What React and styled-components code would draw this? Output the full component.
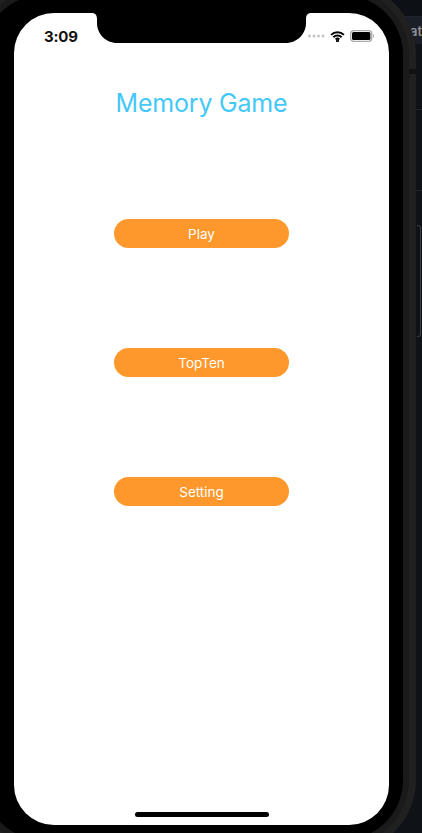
import React from "react";
import styled, { createGlobalStyle } from "styled-components";

const GlobalStyle = createGlobalStyle`
  html, body {
    margin: 0;
    padding: 0;
    height: 100%;
    background: #0f1318;
  }
`;

const Desk = styled.div`
  position: relative;
  width: 422px;
  height: 833px;
  overflow: hidden;
  background: #0f1318;
  font-family: Inter, "Liberation Sans", sans-serif;
`;

const TopStrip = styled.div`
  height: 16px;
  background: #0d1014;
  border-bottom: 1px solid #20252c;
`;

const TabRow = styled.div`
  height: 27px;
  display: flex;
  justify-content: flex-end;
  align-items: center;
  overflow: hidden;
  background: #1a1f27;
  color: #8b9097;
  font-size: 13px;
  font-weight: 600;
`;

const EditorPane = styled.div`
  height: ${(p) => p.$height}px;
  border-bottom: 1px solid #20252c;
`;

const SideBracket = styled.div`
  width: 3px;
  height: 110px;
  margin: 34px 0 0 417px;
  border: 1px solid #3a3d42;
  border-left: 0;
  border-radius: 0 3px 3px 0;
`;

const Phone = styled.div`
  position: absolute;
  top: -18px;
  left: -30px;
  padding: 13px;
  border-radius: 73px;
  background: #202020;
`;

const AntennaBreak = styled.div`
  position: absolute;
  top: 87px;
  right: 0;
  width: 7px;
  height: 5px;
  background: #121212;
`;

const Bezel = styled.div`
  padding: 18px 14px 15px 31px;
  border-radius: 60px;
  background: #000;
  box-shadow: 0 0 0 6px #1a1a1a;
`;

const Screen = styled.div`
  position: relative;
  width: 375px;
  height: 812px;
  display: flex;
  flex-direction: column;
  align-items: center;
  border-radius: 40px;
  overflow: hidden;
  background: #fff;
`;

const Notch = styled.svg`
  position: absolute;
  top: 0;
  left: 78px;
`;

const StatusBar = styled.div`
  width: 100%;
  height: 44px;
  box-sizing: border-box;
  padding: 2px 15px 0 30px;
  display: flex;
  justify-content: space-between;
  align-items: center;
`;

const Time = styled.span`
  font-size: 15px;
  font-weight: 700;
  letter-spacing: -0.2px;
  color: #111;
`;

const StatusIcons = styled.div`
  display: flex;
  align-items: center;
  gap: 5px;
`;

const Title = styled.h1`
  margin: 27px 0 0;
  font-size: 25px;
  font-weight: 400;
  letter-spacing: -0.2px;
  line-height: 38px;
  color: #44c8f8;
`;

const Menu = styled.div`
  margin-top: 97px;
  display: flex;
  flex-direction: column;
  gap: 100px;
`;

const MenuButton = styled.button`
  width: 175px;
  height: 29px;
  padding: 0;
  border: 0;
  border-radius: 15px;
  background: #ff982c;
  color: #fff;
  font-family: inherit;
  font-size: 13.5px;
  cursor: pointer;
`;

const HomeBar = styled.div`
  position: absolute;
  left: 121px;
  bottom: 8px;
  width: 134px;
  height: 5px;
  border-radius: 3px;
  background: #000;
`;

const SignalDots = () => (
  <svg width="17" height="4" viewBox="0 0 17 4">
    {[1.5, 6, 10.5, 15].map((x) => (
      <circle key={x} cx={x} cy="2" r="1.5" fill="#c4c4c4" />
    ))}
  </svg>
);

const Wifi = () => (
  <svg width="15" height="11" viewBox="0 0 16 12" fill="none" stroke="#000" strokeWidth="2.2">
    <path d="M1 4.200a10 10 0 0 1 14 0" />
    <path d="M3.500 6.800a6.400 6.400 0 0 1 9 0" />
    <path d="M6 9.200a2.900 2.900 0 0 1 4 0" />
    <circle cx="8" cy="10.600" r="0.600" fill="#000" />
  </svg>
);

const Battery = () => (
  <svg width="24" height="12" viewBox="0 0 24 12">
    <rect x="0.700" y="0.700" width="21" height="10.600" rx="3" fill="none" stroke="#aaa" strokeWidth="1.300" />
    <rect x="2" y="2" width="18.400" height="8" rx="1.500" fill="#000" />
    <path d="M23 4v4c.7-.3 1-1.100 1-2s-.3-1.700-1-2z" fill="#aaa" />
  </svg>
);

export default function App() {
  return (
    <>
      <GlobalStyle />
      <Desk>
        <TopStrip />
        <TabRow>at</TabRow>
        <EditorPane $height={65} />
        <EditorPane $height={80} />
        <SideBracket />
        <Phone>
          <AntennaBreak />
          <Bezel>
            <Screen>
              <Notch width="219" height="30" viewBox="0 0 219 30">
                <path
                  d="M0 0h219c-3 0-5 2-5 6v4c0 11-9 20-20 20H25C14 30 5 21 5 10V6c0-4-2-6-5-6z"
                  fill="#000"
                />
              </Notch>
              <StatusBar>
                <Time>3:09</Time>
                <StatusIcons>
                  <SignalDots />
                  <Wifi />
                  <Battery />
                </StatusIcons>
              </StatusBar>
              <Title>Memory Game</Title>
              <Menu>
                <MenuButton>Play</MenuButton>
                <MenuButton>TopTen</MenuButton>
                <MenuButton>Setting</MenuButton>
              </Menu>
              <HomeBar />
            </Screen>
          </Bezel>
        </Phone>
      </Desk>
    </>
  );
}
